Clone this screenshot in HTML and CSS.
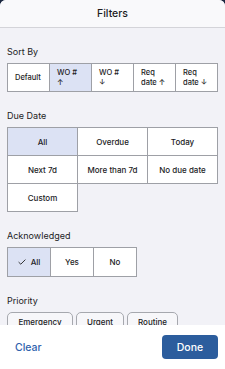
FILE: index.html
```html
<!DOCTYPE html>
<html>
<head>
<meta charset="utf-8">
<link rel="stylesheet" href="styles.css">
</head>
<body>
<div class="sheet">
  <div class="header">Filters</div>
  <div class="content">
    <div class="section">
      <div class="label">Sort By</div>
      <div class="sortrow">
        <div class="scell">Default</div>
        <div class="scell sel">WO #<br>↑</div>
        <div class="scell">WO #<br>↓</div>
        <div class="scell">Req<br>date ↑</div>
        <div class="scell">Req<br>date ↓</div>
      </div>
    </div>
    <div class="section">
      <div class="label">Due Date</div>
      <div class="duegrid">
        <div class="dcell sel">All</div>
        <div class="dcell">Overdue</div>
        <div class="dcell">Today</div>
        <div class="dcell">Next 7d</div>
        <div class="dcell">More than 7d</div>
        <div class="dcell">No due date</div>
        <div class="dcell">Custom</div>
      </div>
    </div>
    <div class="section">
      <div class="label">Acknowledged</div>
      <div class="ackrow">
        <div class="acell sel"><svg class="check" width="8" height="6" viewBox="0 0 8 6"><path d="M0.6 3.1 L2.8 5.2 L7.4 0.6" fill="none" stroke="#222" stroke-width="0.9"/></svg>All</div>
        <div class="acell">Yes</div>
        <div class="acell">No</div>
      </div>
    </div>
    <div class="section">
      <div class="label">Priority</div>
      <div class="chips">
        <div class="chip c1">Emergency</div>
        <div class="chip c2">Urgent</div>
        <div class="chip c3">Routine</div>
      </div>
    </div>
  </div>
  <div class="footer">
    <span class="clear">Clear</span>
    <span class="done">Done</span>
  </div>
</div>
</body>
</html>
```
FILE: styles.css
```css
* { box-sizing: border-box; }
html, body { margin: 0; padding: 0; }
body {
  background: #1b2740;
  font-family: Inter, "Liberation Sans", sans-serif;
  color: #1c1c1e;
  width: 225px;
  height: 369px;
  overflow: hidden;
}
.sheet {
  width: 225px;
  height: 369px;
  background: #f2f2f7;
  border-radius: 6px 6px 0 0;
  display: flex;
  flex-direction: column;
  overflow: hidden;
}
.header {
  height: 28px;
  flex: none;
  background: #f9f9fb;
  border-bottom: 1px solid #d4d4d9;
  display: flex;
  align-items: center;
  justify-content: center;
  font-size: 10.5px;
  font-weight: 500;
  color: #1c1c1e;
}
.content {
  flex: 1;
  overflow: hidden;
  padding: 0 7px;
}
.section { padding-top: 18px; }
.section:first-child { padding-top: 18px; }
.label {
  font-size: 9px;
  line-height: 12px;
  height: 12px;
  margin-bottom: 5px;
  color: #1c1c1e;
}
.sortrow {
  display: grid;
  grid-template-columns: repeat(5, 1fr);
  width: 211px;
  border-top: 1px solid #9ea0a6;
  border-left: 1px solid #9ea0a6;
}
.scell {
  height: 28px;
  border-right: 1px solid #9ea0a6;
  border-bottom: 1px solid #9ea0a6;
  background: #fff;
  display: flex;
  align-items: center;
  padding: 0 7px;
  font-size: 7.5px;
  line-height: 10px;
  font-weight: 500;
}
.sel { background: #dce2f4; }
.duegrid {
  display: grid;
  grid-template-columns: repeat(3, 1fr);
  width: 211px;
  border-top: 1px solid #9ea0a6;
  border-left: 1px solid #9ea0a6;
}
.dcell {
  height: 28px;
  border-right: 1px solid #9ea0a6;
  border-bottom: 1px solid #9ea0a6;
  background: #fff;
  display: flex;
  align-items: center;
  justify-content: center;
  font-size: 8px;
  font-weight: 500;
}
.dcell.sel { background: #dce2f4; }
.ackrow {
  display: grid;
  grid-template-columns: repeat(3, 43px);
  width: 130px;
  border-top: 1px solid #9ea0a6;
  border-left: 1px solid #9ea0a6;
}
.acell {
  height: 29px;
  border-right: 1px solid #9ea0a6;
  border-bottom: 1px solid #9ea0a6;
  background: #fff;
  display: flex;
  align-items: center;
  justify-content: center;
  font-size: 8px;
  font-weight: 500;
}
.acell.sel { background: #dce2f4; }
.check { margin-right: 5px; }
.chips {
  display: flex;
  gap: 3px;
  margin-top: 2px;
}
.chip {
  height: 24px;
  border: 1px solid #a6a8ae;
  border-radius: 5px;
  background: #f7f7fa;
  font-size: 8px;
  font-weight: 500;
  display: flex;
  align-items: center;
  justify-content: center;
  padding-bottom: 5px;
}
.c1 { width: 66px; }
.c2 { width: 48px; }
.c3 { width: 51px; }
.footer {
  height: 44px;
  flex: none;
  background: #ffffff;
  display: flex;
  align-items: center;
  justify-content: space-between;
  padding: 0 7px 0 15px;
}
.clear {
  color: #2f62ad;
  font-size: 10.5px;
  font-weight: 500;
}
.done {
  width: 56px;
  height: 24px;
  background: #2c5d9d;
  color: #fff;
  border-radius: 4px;
  font-size: 10.5px;
  font-weight: 500;
  display: flex;
  align-items: center;
  justify-content: center;
}
```
